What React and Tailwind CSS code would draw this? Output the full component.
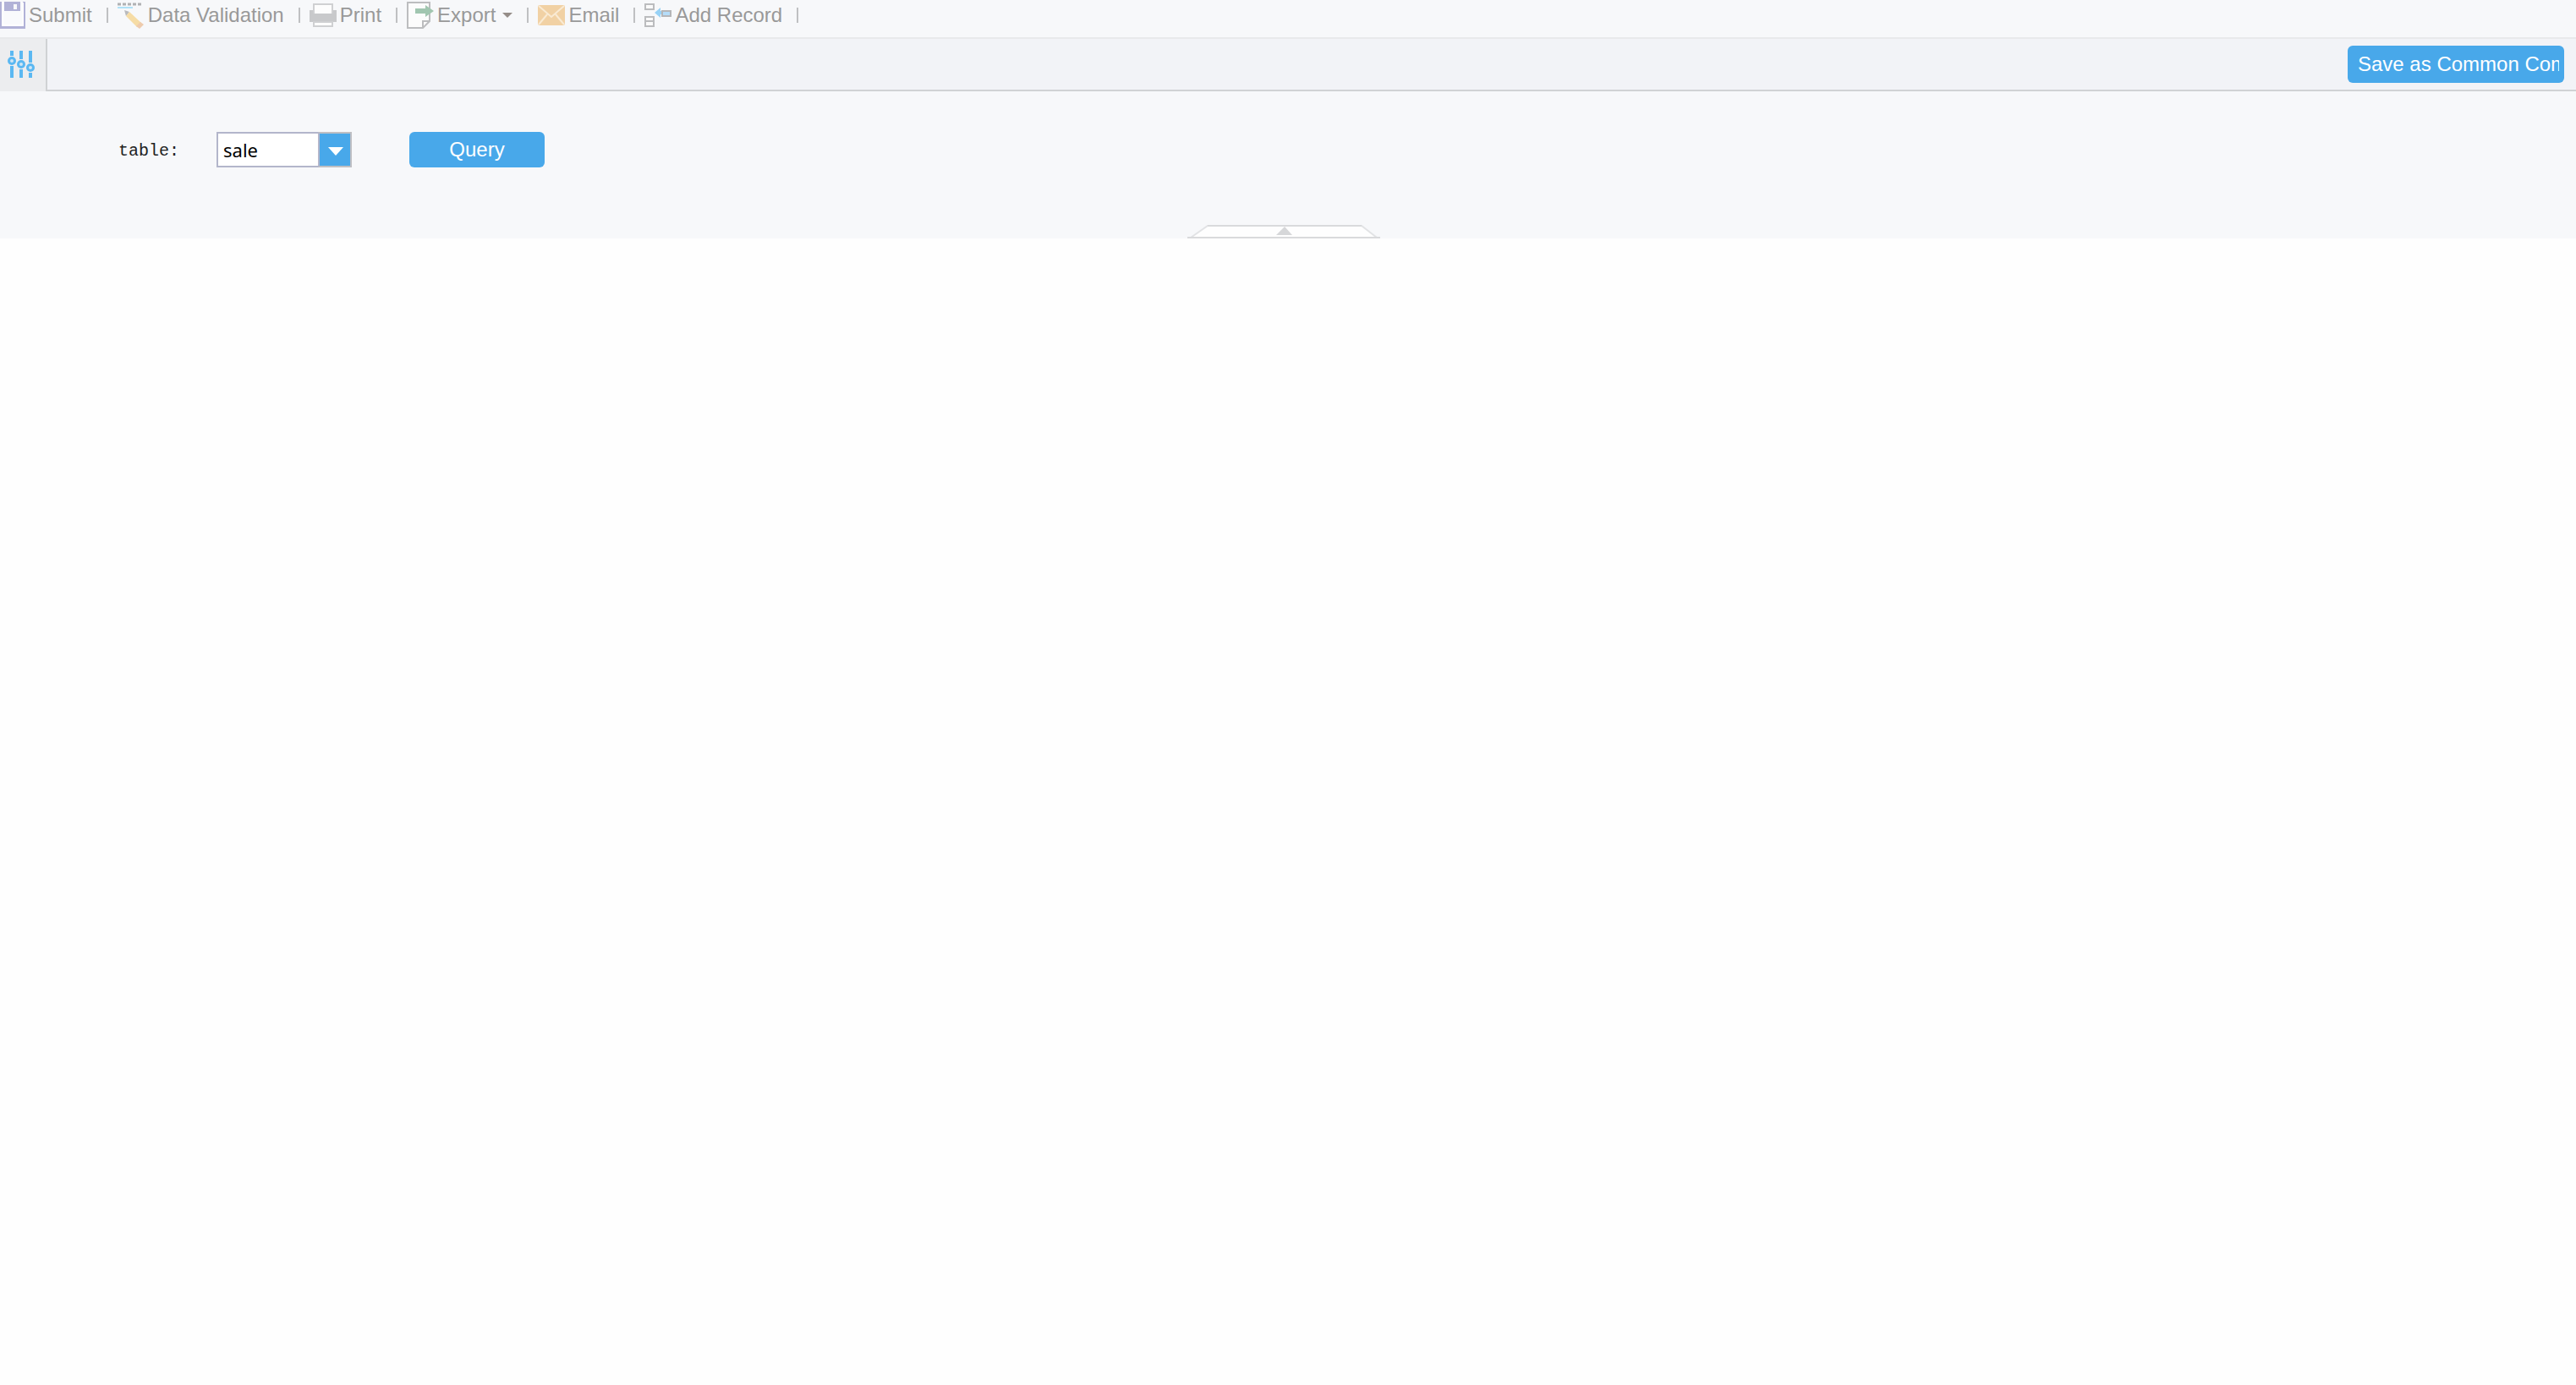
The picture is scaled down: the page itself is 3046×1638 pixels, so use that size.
import React, { useState } from "react";

const SubmitIcon = () => (
  <svg className="h-8 w-[30px] shrink-0" viewBox="0 0 30 32" fill="none">
    <path d="M0 0h30v32H0z" fill="#b1b2d7" />
    <path d="M2 0v28h25V0" fill="#f9fafc" />
    <path d="M5 0h19v11H5z" fill="#b1b2d7" />
    <path d="M3 1v27h24V1" stroke="#fff" strokeWidth="2" />
    <path d="M16 3h4v6h-4z" fill="#f7f8fa" />
  </svg>
);

const ValidationIcon = () => (
  <svg className="h-8 w-8 shrink-0" viewBox="0 0 32 32" fill="none">
    <path d="M0 3h29" stroke="#b0b1b3" strokeWidth="3" strokeDasharray="4 2" />
    <path d="M0 7h18" stroke="#b0e1f7" strokeWidth="2" />
    <path d="M8 10l6 2-4 5z" fill="#b9babd" />
    <path d="M14 12l14 13-5 5L10 17z" fill="#f6dca5" />
    <path d="M27 24l4 3-5 5-4-3z" fill="#eecbad" />
  </svg>
);

const PrintIcon = () => (
  <svg className="h-8 w-8 shrink-0" viewBox="0 0 32 32" fill="none">
    <path d="M5 3h22v13H5z" fill="#fdfdfd" stroke="#cfd0d2" strokeWidth="2" />
    <path d="M0 10h4v4h24v-4h4v14h-4v-1H4v1H0z" fill="#c8c9cb" />
    <path d="M5 24h22v5H5z" fill="#fdfdfd" stroke="#cfd0d2" strokeWidth="2" />
  </svg>
);

const ExportIcon = () => (
  <svg className="h-8 w-8 shrink-0" viewBox="0 0 32 32" fill="none">
    <path d="M1 1h26v22l-8 8H1z" fill="#fcfcfc" stroke="#bcbdbf" strokeWidth="2" />
    <path d="M19 31v-8h8" stroke="#bcbdbf" strokeWidth="2" />
    <path d="M10 8h12V4l10 7-10 7v-4H10z" fill="#a1c6b0" />
  </svg>
);

const EmailIcon = () => (
  <svg className="h-8 w-8 shrink-0" viewBox="0 0 32 32" fill="none">
    <rect y="4" width="32" height="24" rx="2" fill="#f1d1a4" />
    <path d="M1 5l15 13L31 5M1 27l10-12M31 27L21 15" stroke="#f9ead3" strokeWidth="2" />
  </svg>
);

const AddRecordIcon = () => (
  <svg className="h-8 w-8 shrink-0" viewBox="0 0 32 32" fill="none">
    <path d="M1 3h10v6H1zM1 18h10v11H1zM1 23h10" fill="#fafafa" stroke="#bbbcbe" strokeWidth="2" />
    <path d="M12 13l7-6v4h3v4h-3v4z" fill="#98d2f6" />
    <path d="M21 11h10v6H21z" fill="#b5dcf8" stroke="#b4b6b9" strokeWidth="2" />
  </svg>
);

const FilterIcon = () => (
  <svg className="h-8 w-8" viewBox="0 0 32 32" fill="#cfe5f4" stroke="#5bb8f2">
    <path d="M5 0v6M5 18v14M16 0v10M16 22v10M27 0v14M27 26v6" strokeWidth="4" />
    <circle cx="5" cy="12" r="3.500" strokeWidth="3" />
    <circle cx="16" cy="16" r="3.500" strokeWidth="3" />
    <circle cx="27" cy="20" r="3.500" strokeWidth="3" />
  </svg>
);

const toolbarItems = [
  { label: "Submit", Icon: SubmitIcon },
  { label: "Data Validation", Icon: ValidationIcon },
  { label: "Print", Icon: PrintIcon },
  { label: "Export", Icon: ExportIcon, menu: true },
  { label: "Email", Icon: EmailIcon },
  { label: "Add Record", Icon: AddRecordIcon },
];

const Toolbar = () => (
  <div className="flex h-[46px] items-start border-b-2 border-[#e8e9eb] pt-[2px]">
    {toolbarItems.map(({ label, Icon, menu }) => (
      <React.Fragment key={label}>
        <button type="button" className="flex h-8 items-center gap-1 text-[#999]">
          <Icon />
          <span>{label}</span>
          {menu && (
            <svg className="ml-1 h-[6px] w-3" viewBox="0 0 12 6">
              <path d="M0 0h12L6 6z" fill="#958d88" />
            </svg>
          )}
        </button>
        <div className="mt-[7px] mr-[11px] ml-[17px] h-[18px] w-[2px] bg-[#bfc0c2]"></div>
      </React.Fragment>
    ))}
  </div>
);

const App = () => {
  const [table, setTable] = useState("sale");
  const [open, setOpen] = useState(true);

  return (
    <div className="min-h-screen bg-[#fefefe] font-['Liberation_Sans',Arial,sans-serif] text-2xl">
      <div className="bg-[#f7f8fa]">
        <Toolbar />

        <div className="flex h-[62px] bg-[#f2f3f7]">
          <button
            type="button"
            aria-label="Parameters"
            className="flex w-14 items-start border-r-2 border-[#d0d2d4] bg-[#ecedef] pt-[14px] pl-[9px]"
          >
            <FilterIcon />
          </button>
          <div className="flex flex-1 items-start justify-end border-b-2 border-[#d0d2d4] pt-2 pr-[14px]">
            <button
              type="button"
              className="h-11 w-64 rounded-md bg-[#48a8ea] px-[6px] text-white"
            >
              <span className="block overflow-hidden pl-[6px] text-left leading-8 whitespace-nowrap">
                Save as Common Combination
              </span>
            </button>
          </div>
        </div>

        {open && (
          <form
            className="flex h-[158px] items-start pt-12 pl-[140px]"
            onSubmit={(e) => e.preventDefault()}
          >
            <label
              htmlFor="table"
              className="w-[116px] font-['Liberation_Mono',monospace] text-xl leading-[46px] text-[#222]"
            >
              table:
            </label>
            <div className="relative h-[42px] w-40">
              <select
                id="table"
                value={table}
                onChange={(e) => setTable(e.target.value)}
                className="h-full w-full appearance-none border-2 border-[#b3b6cb] bg-white pt-[2px] pl-[6px] font-['Noto_Sans',sans-serif] text-[22px] text-black"
              >
                <option value="sale">sale</option>
              </select>
              <span className="pointer-events-none absolute inset-y-0 right-0 flex w-10 items-center justify-center border-2 border-[#bfbfc3] border-l-[#b3b6cb] bg-[#48a8ea]">
                <svg className="mt-1 ml-[2px] h-[10px] w-[18px]" viewBox="0 0 18 10">
                  <path d="M0 0h18L9 10z" fill="#fff" />
                </svg>
              </span>
            </div>
            <button
              type="submit"
              className="ml-[68px] h-[42px] w-40 rounded-md bg-[#48a8ea] text-white"
            >
              Query
            </button>
          </form>
        )}

        <div className="flex justify-center pr-[10px]">
          <button type="button" aria-label="Toggle parameters" onClick={() => setOpen(!open)}>
            <svg className="h-4 w-[228px]" viewBox="0 0 228 16" fill="none">
              <path d="M4 15L24 1h182l18 14z" fill="#fefefe" stroke="#e2e3e5" strokeWidth="2" />
              <path d="M24 1h182M0 15h228" stroke="#d9dadc" strokeWidth="2" />
              <path d="M105 12h19l-9-10z" fill="#d6d7d9" />
            </svg>
          </button>
        </div>
      </div>
    </div>
  );
};

export default App;
